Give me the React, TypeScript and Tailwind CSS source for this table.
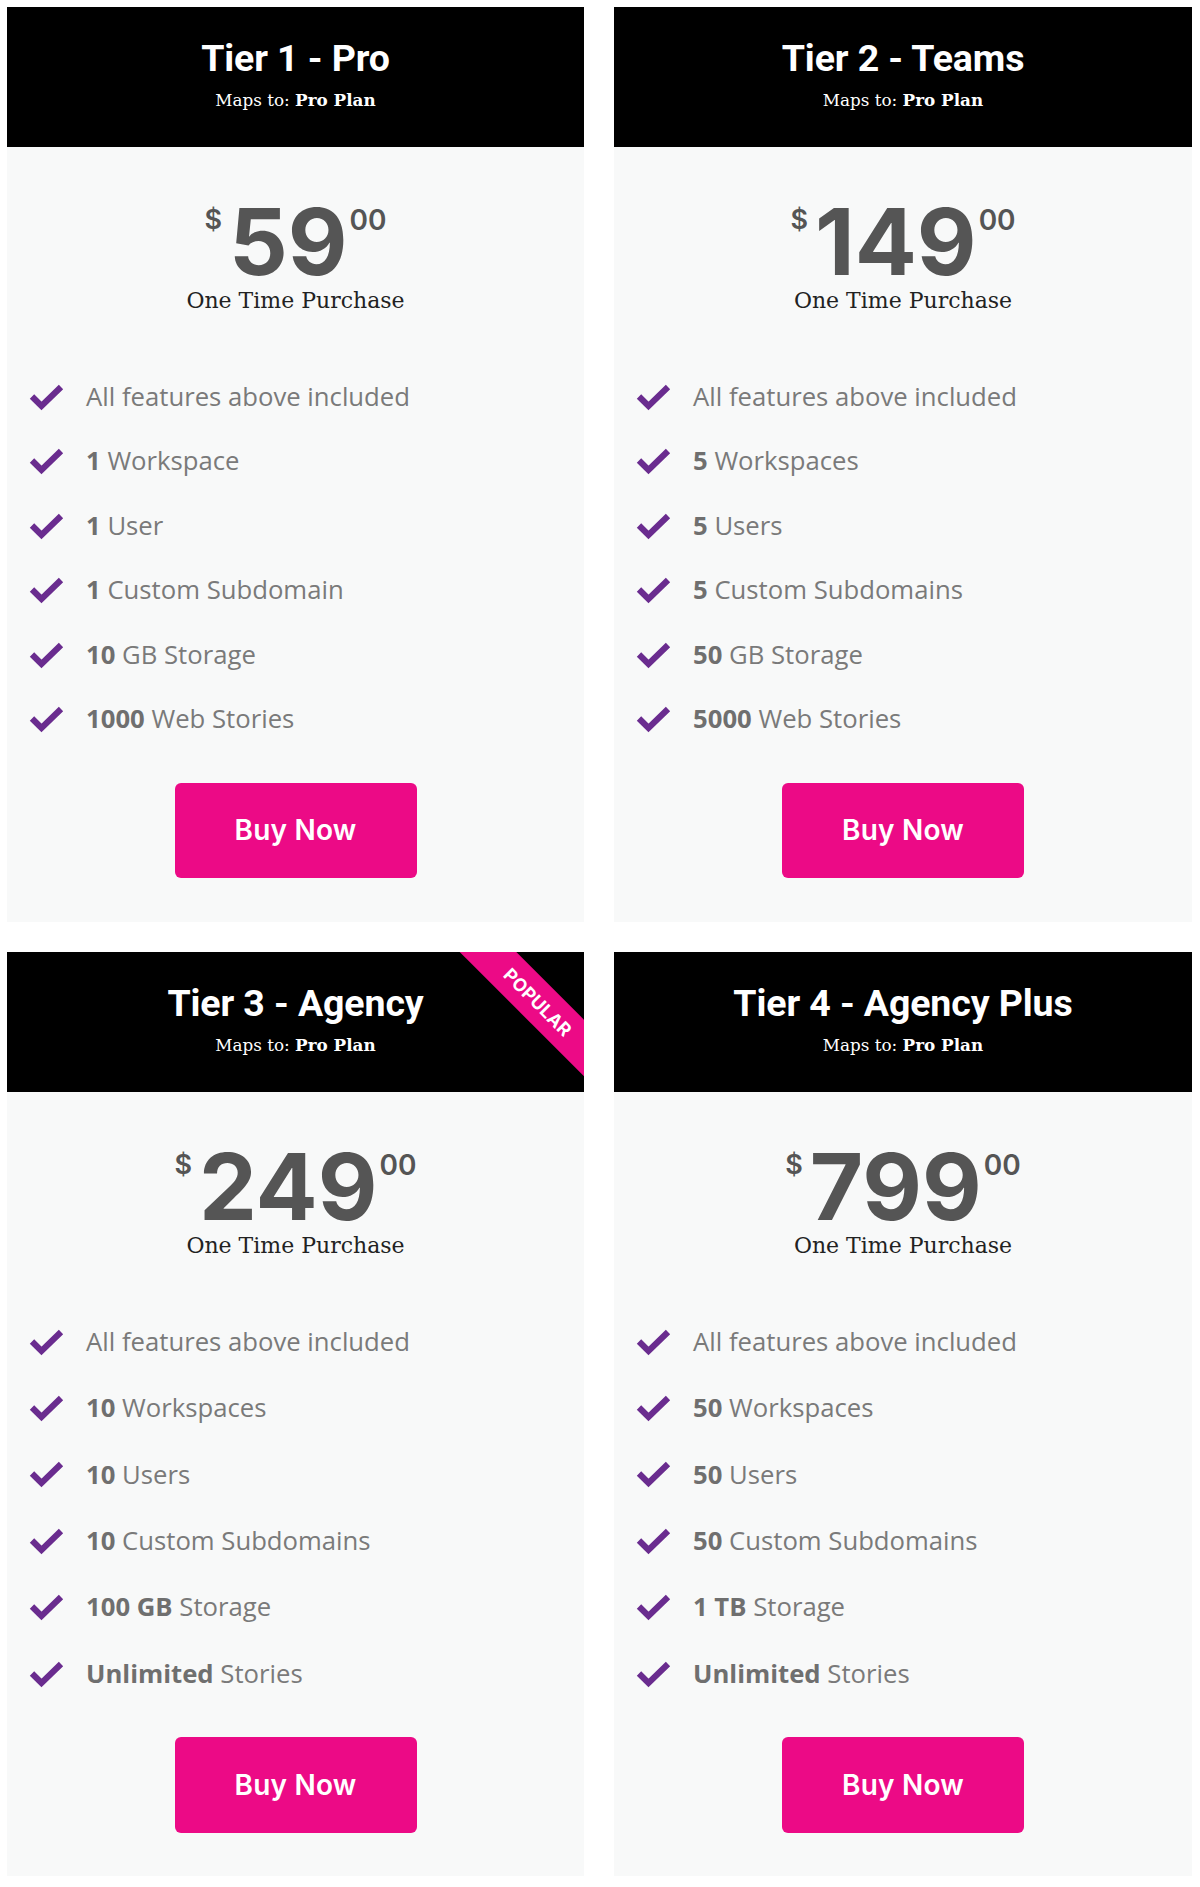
import React from "react";

type Feature = { b?: string; t: string };
type Plan = {
  title: string;
  price: string;
  features: Feature[];
  popular?: boolean;
};

const plans: Plan[] = [
  {
    title: "Tier 1 - Pro",
    price: "59",
    features: [
      { t: "All features above included" },
      { b: "1", t: "Workspace" },
      { b: "1", t: "User" },
      { b: "1", t: "Custom Subdomain" },
      { b: "10", t: "GB Storage" },
      { b: "1000", t: "Web Stories" },
    ],
  },
  {
    title: "Tier 2 - Teams",
    price: "149",
    features: [
      { t: "All features above included" },
      { b: "5", t: "Workspaces" },
      { b: "5", t: "Users" },
      { b: "5", t: "Custom Subdomains" },
      { b: "50", t: "GB Storage" },
      { b: "5000", t: "Web Stories" },
    ],
  },
  {
    title: "Tier 3 - Agency",
    price: "249",
    popular: true,
    features: [
      { t: "All features above included" },
      { b: "10", t: "Workspaces" },
      { b: "10", t: "Users" },
      { b: "10", t: "Custom Subdomains" },
      { b: "100 GB", t: "Storage" },
      { b: "Unlimited", t: "Stories" },
    ],
  },
  {
    title: "Tier 4 - Agency Plus",
    price: "799",
    features: [
      { t: "All features above included" },
      { b: "50", t: "Workspaces" },
      { b: "50", t: "Users" },
      { b: "50", t: "Custom Subdomains" },
      { b: "1 TB", t: "Storage" },
      { b: "Unlimited", t: "Stories" },
    ],
  },
];

function Check() {
  return (
    <svg width="35" height="27" viewBox="0 0 35 27" className="shrink-0">
      <polyline
        points="3,12.5 12.5,22 32,3"
        fill="none"
        stroke="#6a2c8f"
        strokeWidth="6.2"
        strokeLinejoin="miter"
      />
    </svg>
  );
}

function Card({ plan, second }: { plan: Plan; second: boolean }) {
  return (
    <div className="flex flex-col">
      <div className="relative h-[140px] overflow-hidden bg-black pt-[30px] text-center">
        <div className="font-['Roboto',sans-serif] text-[37.5px] font-bold leading-[42px] tracking-[-0.1px] text-white">
          {plan.title}
        </div>
        <div className="mt-[8px] font-['DejaVu_Serif',serif] text-[16.8px] leading-[26px] text-white">
          Maps to: <span className="font-bold">Pro Plan</span>
        </div>
        {plan.popular && (
          <div className="absolute left-[431px] top-[30px] flex h-[40px] w-[200px] rotate-45 items-center justify-center bg-[#ec0a86] font-['Inter',sans-serif] text-[18px] font-bold tracking-[0.2px] text-white">
            POPULAR
          </div>
        )}
      </div>
      <div className="flex flex-1 flex-col items-center bg-[#f8f9f9]">
        <div className="mt-[61px] flex h-[68px] items-start justify-center text-[#555555]">
          <span className="mt-[-1px] mr-[7px] font-['Inter',sans-serif] text-[27px] font-semibold leading-[26px]">
            $
          </span>
          <span className="font-['Inter',sans-serif] text-[92px] font-bold leading-[68px]">
            {plan.price}
          </span>
          <span className="mt-[-1px] ml-[2px] font-['Inter',sans-serif] text-[28px] font-semibold leading-[26px]">
            00
          </span>
        </div>
        <div className="mt-[10px] font-['DejaVu_Serif',serif] text-[22px] leading-[30px] text-[#222222]">
          One Time Purchase
        </div>
        <ul className={second ? "mt-[48px] w-full pl-[22px]" : "mt-[48.8px] w-full pl-[22px]"}>
          {plan.features.map((f, i) => (
            <li
              key={i}
              className={
                second
                  ? "flex h-[66.4px] items-center gap-[22px]"
                  : "flex h-[64.5px] items-center gap-[22px]"
              }
            >
              <Check />
              <span className="font-['Open_Sans',sans-serif] text-[25.7px] text-[#7a7a7a]">
                {f.b && <span className="font-bold text-[#6f6f6f]">{f.b} </span>}
                {f.t}
              </span>
            </li>
          ))}
        </ul>
        <button
          className={
            second
              ? "mt-[30px] mb-[43px] flex h-[96px] w-[242px] items-center justify-center rounded-[6px] bg-[#ec0a86] font-['Inter',sans-serif] text-[28px] font-semibold tracking-[0.2px] text-white"
              : "mt-[31.2px] mb-[44px] flex h-[95px] w-[242px] items-center justify-center rounded-[6px] bg-[#ec0a86] font-['Inter',sans-serif] text-[28px] font-semibold tracking-[0.2px] text-white"
          }
        >
          Buy Now
        </button>
      </div>
    </div>
  );
}

export default function App() {
  return (
    <div className="min-h-[1887px] w-[1200px] bg-white pl-[7px] pt-[7px]">
      <div className="grid grid-cols-[577px_578px] gap-[30px]">
        {plans.map((p, i) => (
          <Card key={i} plan={p} second={i >= 2} />
        ))}
      </div>
    </div>
  );
}
